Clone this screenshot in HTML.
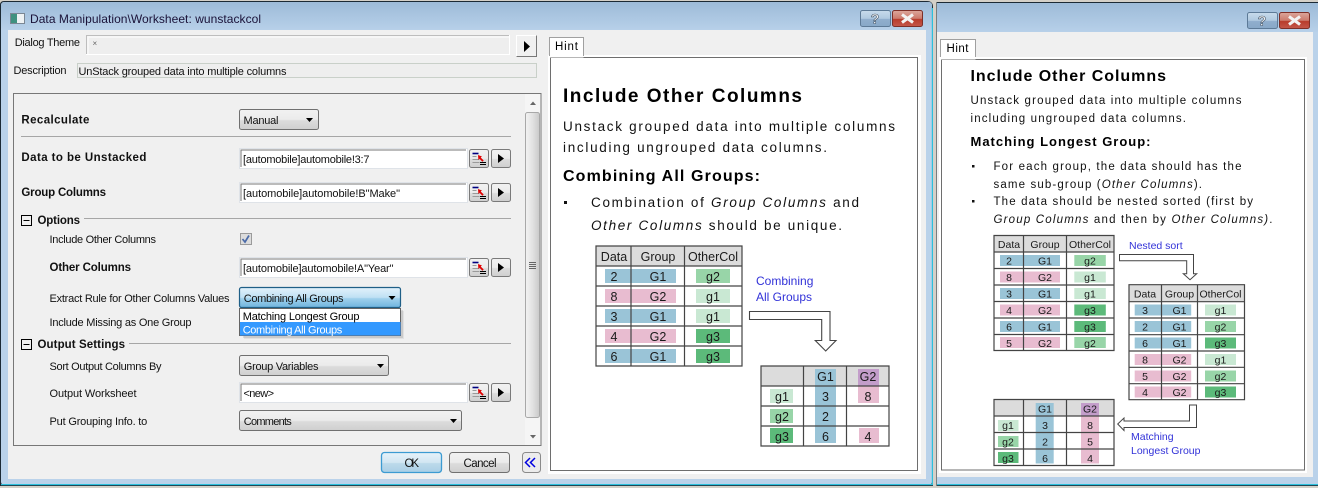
<!DOCTYPE html>
<html><head><meta charset="utf-8"><title>Data Manipulation</title>
<style>
html,body{margin:0;padding:0;background:#d4d0c8;width:1318px;height:488px;overflow:hidden}
svg{display:block;position:absolute;left:0;top:0}
text{font-family:"Liberation Sans",sans-serif;font-size:11px;fill:#111}
.b{font-weight:bold;font-size:11.5px}
.h1{font-weight:bold;font-size:19px;fill:#000}
.h2{font-weight:bold;font-size:16px;fill:#000}
.p{font-size:13.5px;fill:#111}
.h1s{font-weight:bold;font-size:16px;fill:#000}
.h2s{font-weight:bold;font-size:13px;fill:#000}
.ps{font-size:11.5px;fill:#111}
.t{font-size:12.5px;text-anchor:middle;fill:#1a1a1a}
.ts{font-size:10.5px;text-anchor:middle;fill:#1a1a1a}
.bl{font-size:12px;fill:#3232d8}
.bls{font-size:10.5px;fill:#3232d8}
.gl{fill:none;stroke:#444;stroke-width:1.2}
.tab{font-size:11.5px;fill:#000}
</style></head><body>
<svg width="1318" height="488" viewBox="0 0 1318 488" xmlns="http://www.w3.org/2000/svg">
<defs>
<linearGradient id="tb" x1="0" y1="0" x2="0" y2="1"><stop offset="0" stop-color="#9dbbd8"/><stop offset="1" stop-color="#b7d0e9"/></linearGradient>
<linearGradient id="cb" x1="0" y1="0" x2="0" y2="1"><stop offset="0" stop-color="#f2f2f2"/><stop offset=".5" stop-color="#ebebeb"/><stop offset=".55" stop-color="#dcdcdc"/><stop offset="1" stop-color="#cfcfcf"/></linearGradient>
<linearGradient id="cbb" x1="0" y1="0" x2="0" y2="1"><stop offset="0" stop-color="#e3f2fb"/><stop offset=".5" stop-color="#bfe0f4"/><stop offset=".55" stop-color="#a0d0ec"/><stop offset="1" stop-color="#6fb4de"/></linearGradient>
<linearGradient id="okb" x1="0" y1="0" x2="0" y2="1"><stop offset="0" stop-color="#e6f3fa"/><stop offset=".5" stop-color="#d2e6f2"/><stop offset=".55" stop-color="#bcd9ea"/><stop offset="1" stop-color="#a9cfe6"/></linearGradient>
<linearGradient id="hb" x1="0" y1="0" x2="0" y2="1"><stop offset="0" stop-color="#c8dbec"/><stop offset=".5" stop-color="#b0c9e0"/><stop offset=".55" stop-color="#90aecd"/><stop offset="1" stop-color="#88a8c8"/></linearGradient>
<linearGradient id="xb" x1="0" y1="0" x2="0" y2="1"><stop offset="0" stop-color="#dca79c"/><stop offset=".5" stop-color="#cc7a6c"/><stop offset=".55" stop-color="#b83c2c"/><stop offset="1" stop-color="#c4584a"/></linearGradient>
<linearGradient id="sb" x1="0" y1="0" x2="1" y2="0"><stop offset="0" stop-color="#f3f3f3"/><stop offset=".5" stop-color="#e2e2e2"/><stop offset="1" stop-color="#c9c9c9"/></linearGradient>
<g id="ba"><rect x=".5" y=".5" width="19" height="18" rx="2" fill="url(#cb)" stroke="#7a7a7a"/><path d="M7 5l6 4.500-6 4.500z" fill="#000"/></g>
<g id="br"><rect x=".5" y=".5" width="19" height="18" rx="2" fill="url(#cb)" stroke="#7a7a7a"/><path d="M3.500 4.500h6" stroke="#000080" stroke-width="1.600"/><path d="M3.500 7.500h4M3.500 10.500h7M3.500 13.500h7" stroke="#9a9a9a"/><path d="M9 6l4 1.500-1.300 1 3 3-1.300 1.300-3-3-1 1.300z" fill="#e00000"/><path d="M11 13.500h6M11 15.500h6" stroke="#000" stroke-width="1"/></g>
<g id="win"><rect x=".5" y=".5" width="30" height="16" rx="2" fill="url(#hb)" stroke="#5d7a97"/><text x="15" y="13.500" text-anchor="middle" style="font-size:14px;font-weight:bold;fill:#f2f2f2;stroke:#47586b;stroke-width:.6">?</text><rect x="32.500" y=".5" width="30" height="16" rx="2" fill="url(#xb)" stroke="#7d2f28"/><path d="M42 4.500l11 8M53 4.500l-11 8" stroke="#f3f3f3" stroke-width="3"/></g>
</defs>

<!-- background -->
<rect width="1318" height="488" fill="#d4d0c8"/>

<!-- WINDOW 1 -->
<path d="M0 488V5Q0 1 4 1H927Q933 1 933 7V486H0Z" fill="#1c2a35"/>
<rect x="1" y="2" width="931" height="483" rx="3" fill="#bad2ea"/>
<rect x="1" y="2" width="931" height="28" rx="3" fill="url(#tb)"/>
<rect x="1" y="484" width="932" height="1.200" fill="#2cc0dc"/>
<rect x="931.800" y="8" width="1.200" height="477" fill="#2cc0dc"/>
<rect x="8" y="30" width="918" height="449" fill="#f0f0f0"/>

<rect x="10.500" y="13.500" width="14" height="10" fill="#eef2f4" stroke="#7b8794"/>
<rect x="11" y="14" width="6" height="9" fill="#3f9180"/>
<text x="30" y="23" textLength="231" style="font-size:12px;fill:#1a1238">Data Manipulation\Worksheet: wunstackcol</text>
<use href="#win" x="860" y="10"/>

<!-- dialog theme -->
<text x="14.700" y="46" textLength="65.300">Dialog Theme</text>
<rect x="86.500" y="35.500" width="423" height="19" fill="#eeeeee" stroke="#fff"/>
<path d="M86.500 54V35.500H509" fill="none" stroke="#bdbdbd"/>
<path d="M88 54V37H509" fill="none" stroke="#f8f8f8" stroke-width="1.500"/>
<text x="92.500" y="46" style="font-size:8px;fill:#666">×</text>
<rect x="516.500" y="35.500" width="20" height="21" fill="#f0f0f0" stroke="#fff"/>
<path d="M536.500 35.500V56.500H516.500" fill="none" stroke="#777"/>
<path d="M524 41l6 5.500-6 5.500z" fill="#000"/>

<text x="13.500" y="74" textLength="53">Description</text>
<rect x="77.500" y="63.500" width="459" height="14" fill="#eeeeee" stroke="#c9d0c9"/>
<text x="78.500" y="75" textLength="208">UnStack grouped data into multiple columns</text>

<!-- panel -->
<rect x="13.500" y="93.500" width="527.500" height="352" fill="#f0f0f0" stroke="#777"/>
<rect x="525" y="94" width="15.500" height="351" fill="#f5f5f5"/>
<path d="M530 105l3-3.500 3 3.500z" fill="#666"/>
<rect x="525.500" y="112.500" width="14" height="305" rx="2" fill="url(#sb)" stroke="#a8a8a8"/>
<path d="M529 262.500h7M529 264.500h7M529 266.500h7M529 268.500h7" stroke="#666"/>
<path d="M530 435l3 3.500 3-3.500z" fill="#666"/>

<text x="21.400" y="123.500" class="b" textLength="68">Recalculate</text>
<rect x="239.500" y="109.500" width="79" height="20" rx="2" fill="url(#cb)" stroke="#707070"/>
<text x="243.500" y="124" textLength="35">Manual</text>
<path d="M306 118h7l-3.500 4z" fill="#000"/>
<path d="M21 136.500H511" stroke="#a6a6a6"/>

<text x="21.400" y="161" class="b" textLength="125">Data to be Unstacked</text>
<rect x="239.500" y="148.500" width="228" height="20" fill="#fff" stroke="#dfe3e8"/><path d="M241 167V150H466" fill="none" stroke="#777"/>
<text x="243" y="163" textLength="126.500">[automobile]automobile!3:7</text>
<use href="#br" x="469" y="149"/><use href="#ba" x="491" y="149"/>

<text x="21.400" y="196" class="b" textLength="84.600">Group Columns</text>
<rect x="239.500" y="182.500" width="228" height="20" fill="#fff" stroke="#dfe3e8"/><path d="M241 201V184H466" fill="none" stroke="#777"/>
<text x="243" y="197" textLength="157">[automobile]automobile!B"Make"</text>
<use href="#br" x="469" y="183"/><use href="#ba" x="491" y="183"/>

<rect x="21.500" y="215.500" width="10" height="10" fill="#f0f0f0" stroke="#000"/><path d="M23.500 220.500h6" stroke="#000"/>
<text x="37.500" y="224" class="b" textLength="42.500">Options</text>
<path d="M84 218.500H511" stroke="#a6a6a6"/>

<text x="49.500" y="243" textLength="106.500">Include Other Columns</text>
<rect x="240.500" y="233.500" width="11" height="11" fill="#dcdcdc" stroke="#9a9a9a"/>
<path d="M242.500 239l2.500 3 4-6.500" fill="none" stroke="#4a6aa8" stroke-width="1.700"/>

<text x="49.500" y="271" class="b" textLength="81.500">Other Columns</text>
<rect x="239.500" y="257.500" width="228" height="20" fill="#fff" stroke="#dfe3e8"/><path d="M241 276V259H466" fill="none" stroke="#777"/>
<text x="243" y="272" textLength="150.500">[automobile]automobile!A"Year"</text>
<use href="#br" x="469" y="258"/><use href="#ba" x="491" y="258"/>

<text x="49.500" y="302" textLength="180">Extract Rule for Other Columns Values</text>
<text x="49.500" y="326" textLength="142">Include Missing as One Group</text>
<rect x="239.500" y="287.500" width="161" height="20" rx="2" fill="url(#cbb)" stroke="#1f5f87" stroke-width="1.200"/>
<text x="243.800" y="302" textLength="99.700">Combining All Groups</text>
<path d="M388.500 296h7l-3.500 4z" fill="#000"/>

<rect x="244" y="311" width="160" height="28" fill="#000" opacity=".06"/>
<rect x="243" y="310" width="160" height="28" fill="#000" opacity=".1"/>
<rect x="239.500" y="308.500" width="161" height="27" fill="#fff" stroke="#646464"/>
<rect x="240" y="322" width="160.500" height="13.500" fill="#3399ff"/>
<text x="242.700" y="320" textLength="116.800" style="fill:#000">Matching Longest Group</text>
<text x="242.700" y="333.500" textLength="99.600" style="fill:#fff">Combining All Groups</text>

<rect x="21.500" y="339.500" width="10" height="10" fill="#f0f0f0" stroke="#000"/><path d="M23.500 344.500h6" stroke="#000"/>
<text x="37.500" y="348" class="b" textLength="87.500">Output Settings</text>
<path d="M129 343.500H511" stroke="#a6a6a6"/>

<text x="49.500" y="370" textLength="112">Sort Output Columns By</text>
<rect x="239.500" y="355.500" width="149" height="20" rx="2" fill="url(#cb)" stroke="#707070"/>
<text x="243.800" y="370" textLength="74.700">Group Variables</text>
<path d="M377 364h7l-3.500 4z" fill="#000"/>

<text x="49.500" y="397" textLength="87">Output Worksheet</text>
<rect x="239.500" y="382.500" width="228" height="20" fill="#fff" stroke="#dfe3e8"/><path d="M241 401V384H466" fill="none" stroke="#777"/>
<text x="243.500" y="397" textLength="30.500">&lt;new&gt;</text>
<use href="#br" x="469" y="383"/><use href="#ba" x="491" y="383"/>

<text x="49.500" y="425" textLength="97.800">Put Grouping Info. to</text>
<rect x="239.500" y="410.500" width="222" height="20" rx="2" fill="url(#cb)" stroke="#707070"/>
<text x="243.800" y="425" textLength="48">Comments</text>
<path d="M450 419h7l-3.500 4z" fill="#000"/>

<rect x="381.500" y="452.500" width="60" height="20" rx="3" fill="url(#okb)" stroke="#3c9bd2" stroke-width="1.300"/>
<text x="404.500" y="467" textLength="14.500" style="font-size:11.500px">OK</text>
<rect x="449.500" y="452.500" width="60" height="20" rx="3" fill="url(#cb)" stroke="#707070"/>
<text x="463.500" y="467" textLength="33" style="font-size:11.500px">Cancel</text>
<rect x="522.500" y="452.500" width="18" height="20" rx="3" fill="#ececec" stroke="#8a8a8a"/>
<path d="M530 458l-4.500 4.500 4.500 4.500M535 458l-4.500 4.500 4.500 4.500" fill="none" stroke="#0000e0" stroke-width="1.500"/>

<!-- hint 1 -->
<rect x="548" y="55" width="373" height="419" fill="#fff"/>
<rect x="550.500" y="57.500" width="367" height="413" fill="#fff" stroke="#6e6e6e"/>
<rect x="549.500" y="37.500" width="34" height="20" fill="#fff"/>
<path d="M549.500 56V37.500H583.500V56" fill="none" stroke="#a0a0a0"/>
<text x="555" y="50" class="tab" textLength="23">Hint</text>

<text x="563" y="102" class="h1" textLength="239">Include Other Columns</text>
<text x="563" y="131" class="p" textLength="332">Unstack grouped data into multiple columns</text>
<text x="563" y="152" class="p" textLength="264">including ungrouped data columns.</text>
<text x="563" y="181" class="h2" textLength="197">Combining All Groups:</text>
<rect x="564" y="201" width="3" height="3" fill="#111"/>
<text x="591" y="207" class="p" textLength="268">Combination of <tspan font-style="italic">Group Columns</tspan> and</text>
<text x="591" y="230" class="p" textLength="251"><tspan font-style="italic">Other Columns</tspan> should be unique.</text>

<!-- table 1 -->
<rect x="596" y="246" width="146" height="20" fill="#dcdcdc"/>
<rect x="605" y="269" width="71" height="14" fill="#9ac4d7"/><rect x="605" y="289" width="71" height="14" fill="#e8bcd0"/><rect x="605" y="309" width="71" height="14" fill="#9ac4d7"/><rect x="605" y="329" width="71" height="14" fill="#e8bcd0"/><rect x="605" y="349" width="71" height="14" fill="#9ac4d7"/>
<rect x="696" y="269" width="34" height="14" fill="#98d5a8"/><rect x="696" y="289" width="34" height="14" fill="#c9e8d3"/><rect x="696" y="309" width="34" height="14" fill="#c9e8d3"/><rect x="696" y="329" width="34" height="14" fill="#5cba7a"/><rect x="696" y="349" width="34" height="14" fill="#5cba7a"/>
<path class="gl" d="M596 246H742V366H596ZM596 266H742M596 286H742M596 306H742M596 326H742M596 346H742M631 246V366M684.500 246V366"/>
<text class="t" x="614" y="261">Data</text><text class="t" x="658" y="261">Group</text><text class="t" x="713" y="261">OtherCol</text>
<text class="t" x="614" y="281">2</text><text class="t" x="658" y="281">G1</text><text class="t" x="713" y="281">g2</text>
<text class="t" x="614" y="301">8</text><text class="t" x="658" y="301">G2</text><text class="t" x="713" y="301">g1</text>
<text class="t" x="614" y="321">3</text><text class="t" x="658" y="321">G1</text><text class="t" x="713" y="321">g1</text>
<text class="t" x="614" y="341">4</text><text class="t" x="658" y="341">G2</text><text class="t" x="713" y="341">g3</text>
<text class="t" x="614" y="361">6</text><text class="t" x="658" y="361">G1</text><text class="t" x="713" y="361">g3</text>
<text class="bl" x="756" y="285">Combining</text><text class="bl" x="756" y="301">All Groups</text>
<path d="M749.500 311.500H830V340.500H836L825.700 351L815.300 340.500H821.700V319.500H749.500Z" fill="#fff" stroke="#444" stroke-width="1.100"/>

<!-- table 2 -->
<rect x="761" y="366" width="128" height="20" fill="#dcdcdc"/>
<rect x="815" y="369" width="21" height="74" fill="#9ac4d7"/>
<rect x="858" y="369" width="21" height="17" fill="#c39dca"/><rect x="858" y="386" width="21" height="17" fill="#e8bcd0"/><rect x="859" y="428" width="20" height="15" fill="#e8bcd0"/>
<rect x="770" y="389" width="23" height="14" fill="#c9e8d3"/><rect x="770" y="409" width="23" height="14" fill="#98d5a8"/><rect x="770" y="428" width="23" height="15" fill="#5cba7a"/>
<path class="gl" d="M761 366H889V446H761ZM761 386H889M761 406H889M761 426H889M803.500 366V446M846.500 366V446"/>
<text class="t" x="825.500" y="381">G1</text><text class="t" x="868" y="381">G2</text>
<text class="t" x="782" y="401">g1</text><text class="t" x="825.500" y="401">3</text><text class="t" x="868" y="401">8</text>
<text class="t" x="782" y="421">g2</text><text class="t" x="825.500" y="421">2</text>
<text class="t" x="782" y="441">g3</text><text class="t" x="825.500" y="441">6</text><text class="t" x="868" y="441">4</text>

<!-- WINDOW 2 -->
<rect x="936.500" y="2" width="382" height="484" fill="#1c2a35"/>
<rect x="937" y="3" width="381" height="482" fill="#bad2ea"/>
<rect x="937" y="3" width="381" height="29" fill="url(#tb)"/>
<rect x="937" y="484" width="381" height="1.200" fill="#2cc0dc"/>
<rect x="937" y="32" width="376" height="445" fill="#f0f0f0"/>
<use href="#win" x="1247" y="12"/>

<rect x="939" y="57" width="368" height="416" fill="#fff"/>
<rect x="941.500" y="59.500" width="363" height="410.500" fill="#fff" stroke="#6e6e6e"/>
<rect x="940.500" y="39.500" width="35" height="20" fill="#fff"/>
<path d="M940.500 57V39.500H975.500V57" fill="none" stroke="#a0a0a0"/>
<text x="946.500" y="52" class="tab" textLength="22">Hint</text>

<text x="970.500" y="81" class="h1s" textLength="195.500">Include Other Columns</text>
<text x="970.500" y="104" class="ps" textLength="271">Unstack grouped data into multiple columns</text>
<text x="970.500" y="122" class="ps" textLength="215.500">including ungrouped data columns.</text>
<text x="970.500" y="146" class="h2s" textLength="180">Matching Longest Group:</text>
<rect x="972" y="165" width="2.500" height="2.500" fill="#111"/>
<text x="993.500" y="170" class="ps" textLength="248">For each group, the data should has the</text>
<text x="993.500" y="188" class="ps" textLength="208.500">same sub-group (<tspan font-style="italic">Other Columns</tspan>).</text>
<rect x="972" y="200" width="2.500" height="2.500" fill="#111"/>
<text x="993.500" y="205" class="ps" textLength="259.500">The data should be nested sorted (first by</text>
<text x="993.500" y="223" class="ps" textLength="279"><tspan font-style="italic">Group Columns</tspan> and then by <tspan font-style="italic">Other Columns)</tspan>.</text>

<!-- table A -->
<rect x="994" y="235.500" width="120" height="16.500" fill="#dcdcdc"/>
<rect x="1000" y="255" width="60" height="11" fill="#9ac4d7"/><rect x="1000" y="271.500" width="60" height="11" fill="#e8bcd0"/><rect x="1000" y="288" width="60" height="11" fill="#9ac4d7"/><rect x="1000" y="304.500" width="60" height="11" fill="#e8bcd0"/><rect x="1000" y="321" width="60" height="11" fill="#9ac4d7"/><rect x="1000" y="337" width="60" height="11" fill="#e8bcd0"/>
<rect x="1074.300" y="255" width="31.500" height="11" fill="#98d5a8"/><rect x="1074.300" y="271.500" width="31.500" height="11" fill="#c9e8d3"/><rect x="1074.300" y="288" width="31.500" height="11" fill="#c9e8d3"/><rect x="1074.300" y="304.500" width="31.500" height="11" fill="#5cba7a"/><rect x="1074.300" y="321" width="31.500" height="11" fill="#5cba7a"/><rect x="1074.300" y="337" width="31.500" height="11" fill="#98d5a8"/>
<path class="gl" d="M994 235.500H1114V350.500H994ZM994 252H1114M994 268.500H1114M994 285H1114M994 301.500H1114M994 318H1114M994 334.500H1114M1023.500 235.500V350.500M1066.500 235.500V350.500"/>
<text class="ts" x="1009" y="248">Data</text><text class="ts" x="1045" y="248">Group</text><text class="ts" x="1090" y="248">OtherCol</text>
<text class="ts" x="1009" y="264.500">2</text><text class="ts" x="1045" y="264.500">G1</text><text class="ts" x="1090" y="264.500">g2</text>
<text class="ts" x="1009" y="281">8</text><text class="ts" x="1045" y="281">G2</text><text class="ts" x="1090" y="281">g1</text>
<text class="ts" x="1009" y="297.500">3</text><text class="ts" x="1045" y="297.500">G1</text><text class="ts" x="1090" y="297.500">g1</text>
<text class="ts" x="1009" y="314">4</text><text class="ts" x="1045" y="314">G2</text><text class="ts" x="1090" y="314">g3</text>
<text class="ts" x="1009" y="330.500">6</text><text class="ts" x="1045" y="330.500">G1</text><text class="ts" x="1090" y="330.500">g3</text>
<text class="ts" x="1009" y="347">5</text><text class="ts" x="1045" y="347">G2</text><text class="ts" x="1090" y="347">g2</text>

<text class="bls" x="1129" y="249">Nested sort</text>
<path d="M1119.500 254.500H1193.500V273.700H1196.700L1190 279.700L1183.300 273.700H1186.700V260.700H1119.500Z" fill="#fff" stroke="#444"/>

<!-- table B -->
<rect x="1129" y="284.700" width="115.500" height="17" fill="#dcdcdc"/>
<rect x="1134.700" y="304.500" width="56.500" height="11" fill="#9ac4d7"/><rect x="1134.700" y="321" width="56.500" height="11" fill="#9ac4d7"/><rect x="1134.700" y="337.500" width="56.500" height="11" fill="#9ac4d7"/><rect x="1134.700" y="354" width="56.500" height="11" fill="#e8bcd0"/><rect x="1134.700" y="370.500" width="56.500" height="11" fill="#e8bcd0"/><rect x="1134.700" y="386.500" width="56.500" height="11" fill="#e8bcd0"/>
<rect x="1205" y="304.500" width="31" height="11" fill="#c9e8d3"/><rect x="1205" y="321" width="31" height="11" fill="#98d5a8"/><rect x="1205" y="337.500" width="31" height="11" fill="#5cba7a"/><rect x="1205" y="354" width="31" height="11" fill="#c9e8d3"/><rect x="1205" y="370.500" width="31" height="11" fill="#98d5a8"/><rect x="1205" y="386.500" width="31" height="11" fill="#5cba7a"/>
<path class="gl" d="M1129 284.700H1244.500V399.700H1129ZM1129 301.700H1244.500M1129 318H1244.500M1129 334.700H1244.500M1129 351H1244.500M1129 367.300H1244.500M1129 383.700H1244.500M1161.500 284.700V399.700M1197.500 284.700V399.700"/>
<text class="ts" x="1145" y="297.500">Data</text><text class="ts" x="1179.500" y="297.500">Group</text><text class="ts" x="1220.500" y="297.500">OtherCol</text>
<text class="ts" x="1145" y="314">3</text><text class="ts" x="1179.500" y="314">G1</text><text class="ts" x="1220.500" y="314">g1</text>
<text class="ts" x="1145" y="330.500">2</text><text class="ts" x="1179.500" y="330.500">G1</text><text class="ts" x="1220.500" y="330.500">g2</text>
<text class="ts" x="1145" y="347">6</text><text class="ts" x="1179.500" y="347">G1</text><text class="ts" x="1220.500" y="347">g3</text>
<text class="ts" x="1145" y="363.500">8</text><text class="ts" x="1179.500" y="363.500">G2</text><text class="ts" x="1220.500" y="363.500">g1</text>
<text class="ts" x="1145" y="380">5</text><text class="ts" x="1179.500" y="380">G2</text><text class="ts" x="1220.500" y="380">g2</text>
<text class="ts" x="1145" y="396">4</text><text class="ts" x="1179.500" y="396">G2</text><text class="ts" x="1220.500" y="396">g3</text>

<path d="M1196.500 405V427.500H1124V430.500L1117.700 424L1124 418V421H1189.500V405Z" fill="#fff" stroke="#444"/>

<!-- table C -->
<rect x="994" y="399.500" width="120" height="16.500" fill="#dcdcdc"/>
<rect x="1035.700" y="403" width="18" height="60.500" fill="#9ac4d7"/>
<rect x="1081" y="403" width="18" height="13" fill="#c39dca"/><rect x="1081" y="416" width="18" height="47.500" fill="#e8bcd0"/>
<rect x="998" y="420" width="20.500" height="11" fill="#c9e8d3"/><rect x="998" y="436" width="20.500" height="11" fill="#98d5a8"/><rect x="998" y="452" width="20.500" height="11" fill="#5cba7a"/>
<path class="gl" d="M994 399.500H1114V465.500H994ZM994 416H1114M994 432.500H1114M994 449H1114M1023.500 399.500V465.500M1066.500 399.500V465.500"/>
<text class="ts" x="1045" y="412.500">G1</text><text class="ts" x="1090" y="412.500">G2</text>
<text class="ts" x="1008" y="429">g1</text><text class="ts" x="1045" y="429">3</text><text class="ts" x="1090" y="429">8</text>
<text class="ts" x="1008" y="445.500">g2</text><text class="ts" x="1045" y="445.500">2</text><text class="ts" x="1090" y="445.500">5</text>
<text class="ts" x="1008" y="462">g3</text><text class="ts" x="1045" y="462">6</text><text class="ts" x="1090" y="462">4</text>

<text class="bls" x="1131" y="440">Matching</text><text class="bls" x="1131" y="454">Longest Group</text>
</svg>
</body></html>
